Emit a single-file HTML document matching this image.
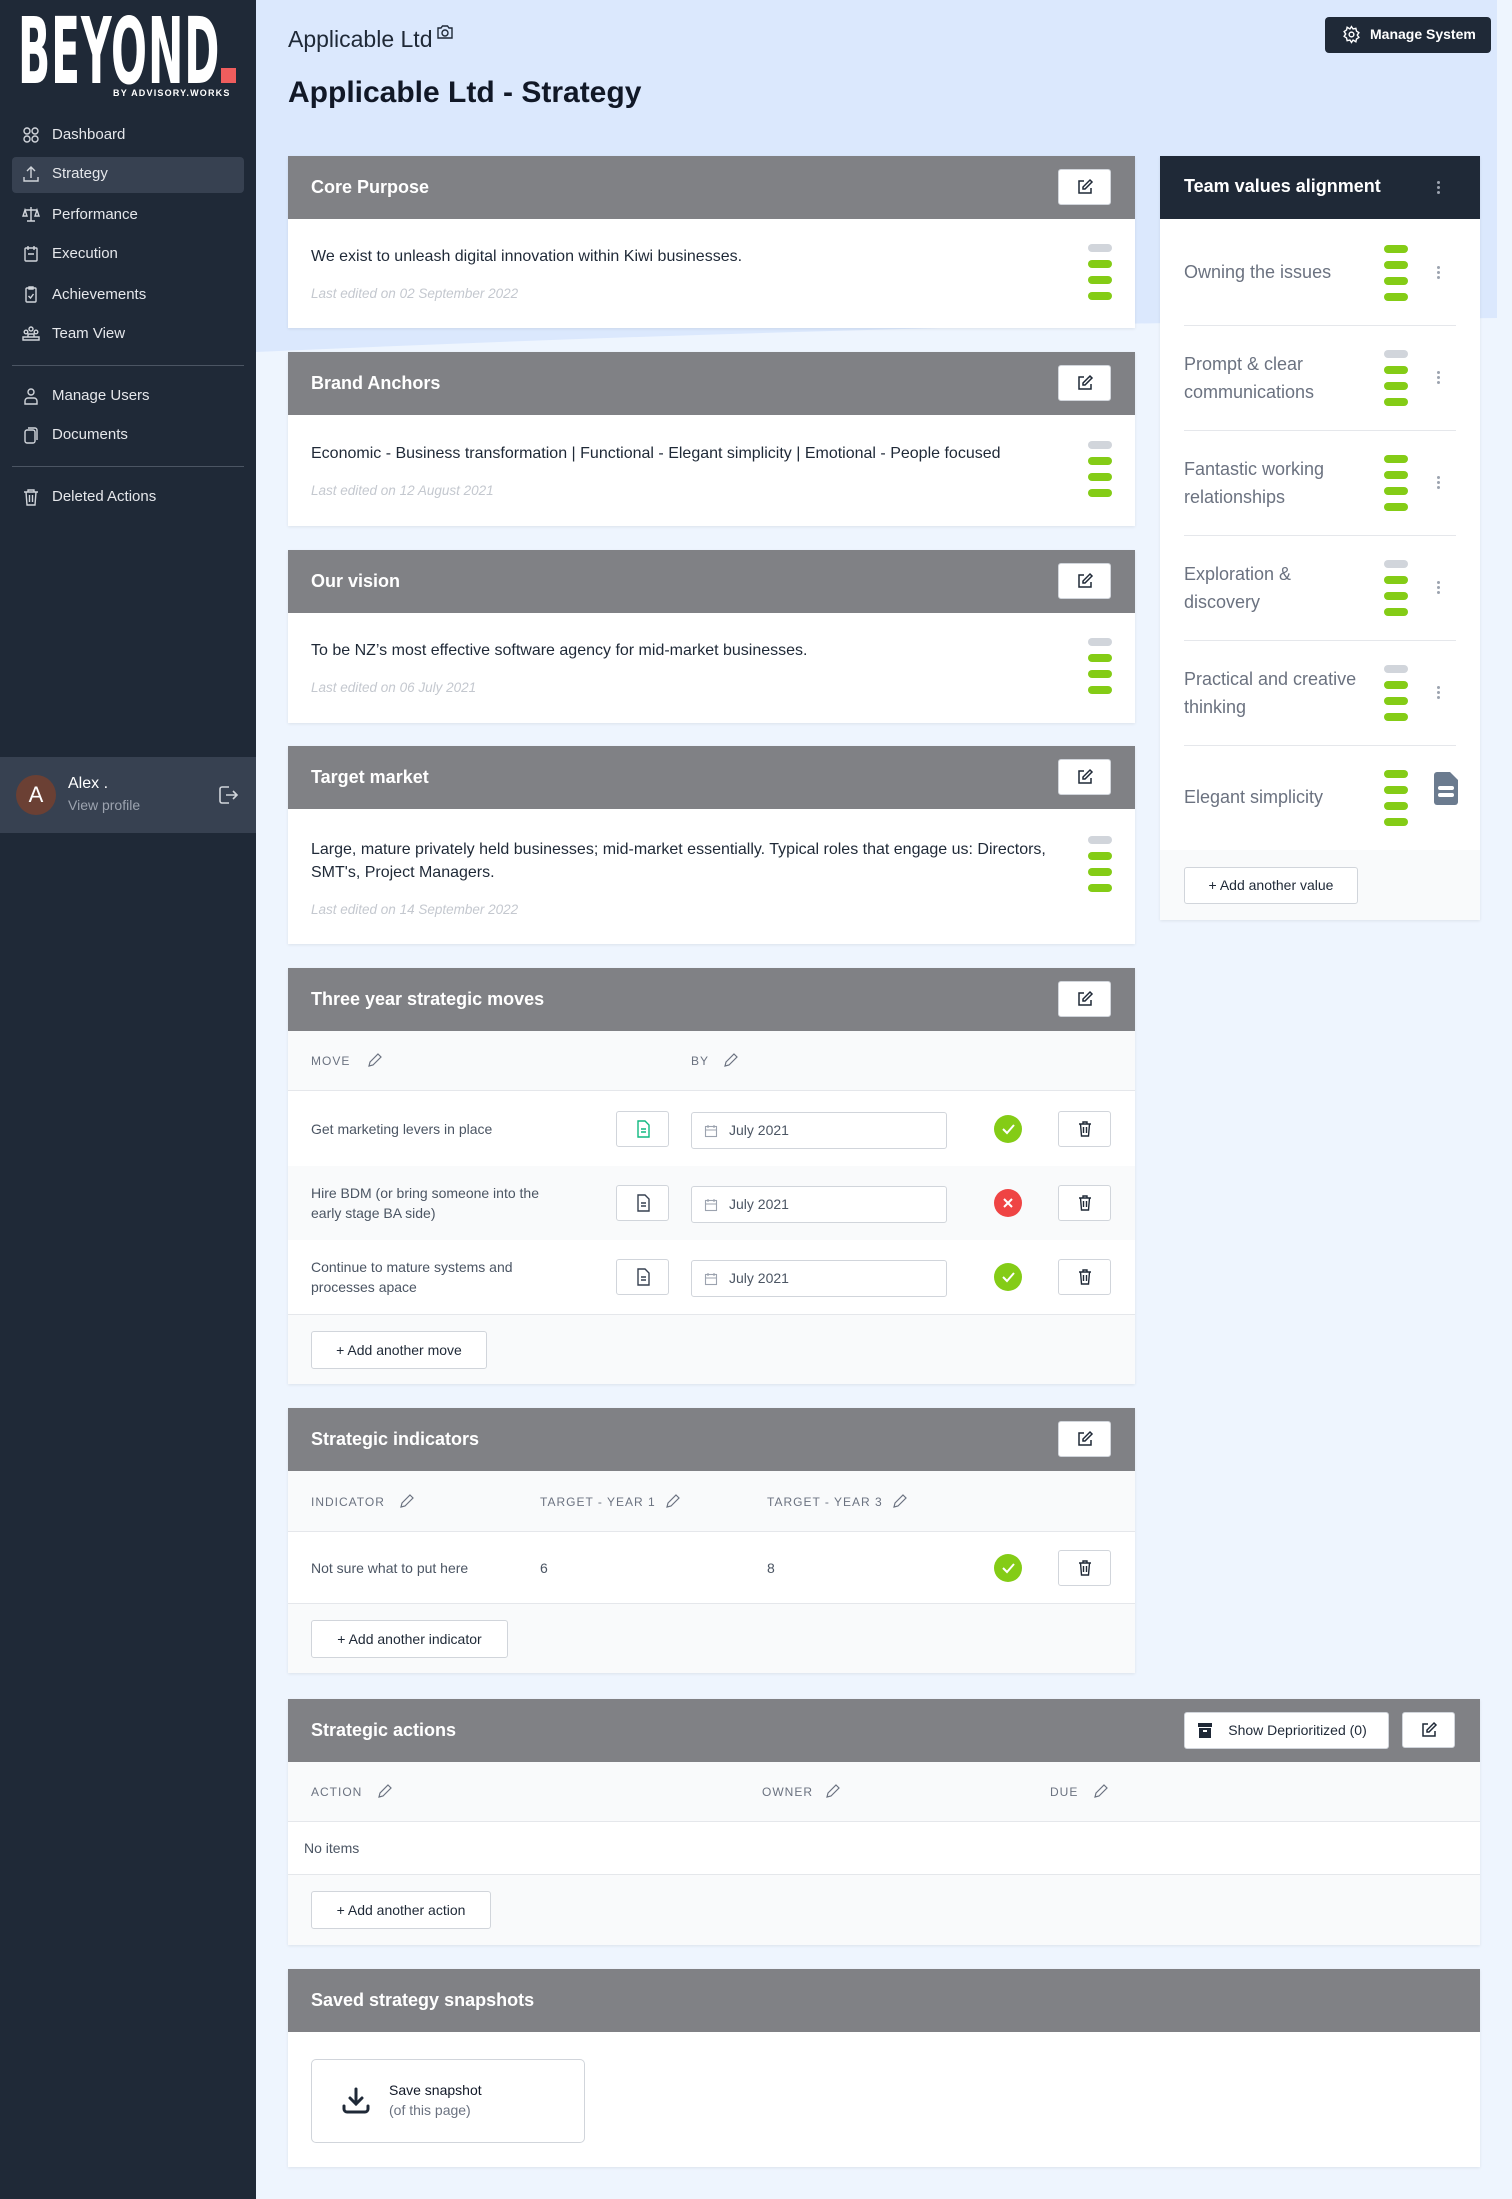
<!DOCTYPE html>
<html><head><meta charset="utf-8"><style>
*{box-sizing:border-box;margin:0;padding:0}
body{width:1512px;height:2199px;position:relative;overflow:hidden;background:#eef5fe;font-family:"Liberation Sans",sans-serif;color:#111827}
.a{position:absolute}
.side{left:0;top:0;width:256px;height:2199px;background:#1f2937}
.nav{left:52px;font-size:15px;color:#e5e7eb;line-height:20px}
.ni{left:22px;width:18px;height:18px}
.card{position:absolute;background:#fff;box-shadow:0 1px 3px rgba(0,0,0,.08)}
.hd{position:absolute;left:0;top:0;right:0;height:63px;background:#808185}
.hd .t{position:absolute;left:23px;top:21px;font-size:18px;font-weight:bold;color:#fff}
.eb{position:absolute;width:53px;height:36px;background:#fff;border:1px solid #d1d5db;border-radius:3px;top:13px;right:24px}
.eb svg{position:absolute;left:17px;top:8px}
.txt{position:absolute;left:23px;font-size:16px;color:#1f2937;line-height:23px}
.le{position:absolute;left:23px;font-size:13.5px;color:#c4c8cf;font-style:italic}
.bar{position:absolute;width:24px;height:8px;border-radius:4px;background:#84cc16}
.bar.g{background:#d1d5db}
.lab{position:absolute;font-size:12px;color:#6b7280;letter-spacing:1px}
.rt{position:absolute;font-size:14px;color:#4b5563;line-height:20px}
.btn{position:absolute;background:#fff;border:1px solid #d1d5db;border-radius:3px;font-size:14px;color:#1f2937;text-align:center}
.sq{position:absolute;width:53px;height:36px;background:#fff;border:1px solid #d1d5db;border-radius:3px}
.sq svg{position:absolute;left:17px;top:8px}
.date{position:absolute;left:691px;width:256px;height:37px;border:1px solid #d1d5db;border-radius:3px;background:#fff;font-size:14px;color:#4b5563}
.ok{position:absolute;left:994px;width:28px;height:28px;border-radius:50%;background:#84cc16}
.no{position:absolute;left:994px;width:28px;height:28px;border-radius:50%;background:#ef4444}
.vt{position:absolute;left:24px;font-size:18px;color:#6b7280;line-height:28px}
.dv{position:absolute;left:24px;width:272px;height:1px;background:#e5e7eb}
.dots{position:absolute;left:277px;width:4px}
.dots i{display:block;width:3px;height:3px;border-radius:50%;background:#9ca3af;margin-bottom:2px}
.sep{position:absolute;left:0;right:0;height:1px;background:#e5e7eb}
.gry{position:absolute;left:0;right:0;background:#f9fafb}
</style></head><body>
<svg class="a" style="left:256px;top:0" width="1256" height="360"><path d="M0 0H1241V318Q600 325 0 352Z" fill="#dbe8fd"/></svg>

<div class="a side"></div>
<div class="a" style="left:18px;top:10px;width:380px;font-size:92px;font-weight:bold;color:#fff;letter-spacing:2px;transform:scaleX(.46);transform-origin:0 0;line-height:84px;font-family:'DejaVu Sans','Liberation Sans',sans-serif">BEYOND</div>
<div class="a" style="left:221px;top:68px;width:15px;height:15px;background:#ef5d5d"></div>
<div class="a" style="left:113px;top:88px;font-size:9px;font-weight:bold;color:#fff;letter-spacing:1.2px">BY ADVISORY.WORKS</div>

<div class="a" style="left:12px;top:157px;width:232px;height:36px;background:#374151;border-radius:4px"></div>
<svg class="a ni" style="top:126px" viewBox="0 0 18 18" fill="none" stroke="#d1d5db" stroke-width="1.4"><circle cx="5" cy="5" r="3"/><circle cx="13" cy="5" r="3"/><circle cx="5" cy="13" r="3"/><circle cx="13" cy="13" r="3"/></svg>
<div class="a nav" style="top:125px">Dashboard</div>
<svg class="a ni" style="top:165px" viewBox="0 0 18 18" fill="none" stroke="#d1d5db" stroke-width="1.4"><path d="M9 13V2M5 6l4-4 4 4M2 12v4h14v-4"/></svg>
<div class="a nav" style="top:164px">Strategy</div>
<svg class="a ni" style="top:205px" viewBox="0 0 18 18" fill="none" stroke="#d1d5db" stroke-width="1.4"><path d="M9 2v14M5 16h8M3 5h12M3 5l-2 6h4zM15 5l-2 6h4z"/></svg>
<div class="a nav" style="top:205px">Performance</div>
<svg class="a ni" style="top:245px" viewBox="0 0 18 18" fill="none" stroke="#d1d5db" stroke-width="1.4"><rect x="3" y="3" width="12" height="13" rx="1"/><path d="M6 1v4M12 1v4M6 9h6"/></svg>
<div class="a nav" style="top:244px">Execution</div>
<svg class="a ni" style="top:285px" viewBox="0 0 18 18" fill="none" stroke="#d1d5db" stroke-width="1.4"><rect x="4" y="3" width="10" height="14" rx="1"/><path d="M7 2h4v2H7zM6.5 11l2 2 3-4"/></svg>
<div class="a nav" style="top:285px">Achievements</div>
<svg class="a ni" style="top:325px" viewBox="0 0 18 18" fill="none" stroke="#d1d5db" stroke-width="1.4"><circle cx="9" cy="4" r="2"/><circle cx="4" cy="7" r="1.8"/><circle cx="14" cy="7" r="1.8"/><path d="M1 15v-3h16v3zM6 12v-3h6v3"/></svg>
<div class="a nav" style="top:324px">Team View</div>
<div class="a" style="left:12px;top:365px;width:232px;height:1px;background:#4b5563"></div>
<svg class="a ni" style="top:387px" viewBox="0 0 18 18" fill="none" stroke="#d1d5db" stroke-width="1.4"><circle cx="9" cy="5" r="3"/><path d="M3 17v-3a3 3 0 013-3h6a3 3 0 013 3v3z"/></svg>
<div class="a nav" style="top:386px">Manage Users</div>
<svg class="a ni" style="top:426px" viewBox="0 0 18 18" fill="none" stroke="#d1d5db" stroke-width="1.4"><rect x="3" y="4" width="10" height="13" rx="2"/><path d="M6 2h7a2 2 0 012 2v10"/></svg>
<div class="a nav" style="top:425px">Documents</div>
<div class="a" style="left:12px;top:466px;width:232px;height:1px;background:#4b5563"></div>
<svg class="a ni" style="top:488px" viewBox="0 0 18 18" fill="none" stroke="#d1d5db" stroke-width="1.4"><path d="M2 4h14M6 4V2h6v2M4 4l1 13h8l1-13M7.5 7v7M10.5 7v7"/></svg>
<div class="a nav" style="top:487px">Deleted Actions</div>

<div class="a" style="left:0;top:757px;width:256px;height:76px;background:#374151"></div>
<div class="a" style="left:16px;top:775px;width:40px;height:40px;border-radius:50%;background:#6b4034;color:#fff;font-size:22px;text-align:center;line-height:40px">A</div>
<div class="a" style="left:68px;top:775px;font-size:16px;color:#fff">Alex .</div>
<div class="a" style="left:68px;top:797px;font-size:14px;color:#9ca3af">View profile</div>
<svg class="a" style="left:217px;top:784px" width="22" height="22" viewBox="0 0 22 22" fill="none" stroke="#d1d5db" stroke-width="1.6"><path d="M12 3H5a2 2 0 00-2 2v12a2 2 0 002 2h7M9 11h11M16 7l4 4-4 4"/></svg>

<div class="a" style="left:288px;top:26px;font-size:23px;color:#1f2937">Applicable Ltd</div>
<svg class="a" style="left:436px;top:24px" width="18" height="16" viewBox="0 0 18 16" fill="none" stroke="#1f2937" stroke-width="1.4"><path d="M2 4h3l1.5-2h5L13 4h3v10H2z"/><circle cx="9" cy="9" r="3"/></svg>
<div class="a" style="left:288px;top:76px;font-size:30px;font-weight:bold;color:#111827">Applicable Ltd - Strategy</div>

<div class="a" style="left:1325px;top:17px;width:166px;height:36px;background:#1f2937;border-radius:4px"></div>
<svg class="a" style="left:1342px;top:25px" width="19" height="19" viewBox="0 0 24 24" fill="none" stroke="#fff" stroke-width="1.8"><circle cx="12" cy="12" r="3"/><path d="M12 2l2 3 3.5-.8.8 3.5 3 2-2 3 2 3-3 2-.8 3.5L14 19l-2 3-2-3-3.5.8-.8-3.5-3-2 2-3-2-3 3-2 .8-3.5L10 5z"/></svg>
<div class="a" style="left:1370px;top:26px;font-size:14px;font-weight:bold;color:#fff">Manage System</div>

<div class="card" style="left:288px;top:156px;width:847px;height:172px">
<div class="hd"><div class="t">Core Purpose</div><div class="eb"><svg width="18" height="18" viewBox="0 0 18 18" fill="none" stroke="#1f2937" stroke-width="1.5"><path d="M8 3H3v12h12v-5M14 2l2 2-7 7H7V9z"/></svg></div></div>
<div class="txt" style="top:89px">We exist to unleash digital innovation within Kiwi businesses.</div>
<div class="le" style="top:130px">Last edited on 02 September 2022</div>
<div class="bar g" style="left:800px;top:88px"></div><div class="bar" style="left:800px;top:104px"></div><div class="bar" style="left:800px;top:120px"></div><div class="bar" style="left:800px;top:136px"></div>
</div>
<div class="card" style="left:288px;top:352px;width:847px;height:174px">
<div class="hd"><div class="t">Brand Anchors</div><div class="eb"><svg width="18" height="18" viewBox="0 0 18 18" fill="none" stroke="#1f2937" stroke-width="1.5"><path d="M8 3H3v12h12v-5M14 2l2 2-7 7H7V9z"/></svg></div></div>
<div class="txt" style="top:90px">Economic - Business transformation | Functional - Elegant simplicity | Emotional - People focused</div>
<div class="le" style="top:131px">Last edited on 12 August 2021</div>
<div class="bar g" style="left:800px;top:89px"></div><div class="bar" style="left:800px;top:105px"></div><div class="bar" style="left:800px;top:121px"></div><div class="bar" style="left:800px;top:137px"></div>
</div>
<div class="card" style="left:288px;top:550px;width:847px;height:173px">
<div class="hd"><div class="t">Our vision</div><div class="eb"><svg width="18" height="18" viewBox="0 0 18 18" fill="none" stroke="#1f2937" stroke-width="1.5"><path d="M8 3H3v12h12v-5M14 2l2 2-7 7H7V9z"/></svg></div></div>
<div class="txt" style="top:89px">To be NZ’s most effective software agency for mid-market businesses.</div>
<div class="le" style="top:130px">Last edited on 06 July 2021</div>
<div class="bar g" style="left:800px;top:88px"></div><div class="bar" style="left:800px;top:104px"></div><div class="bar" style="left:800px;top:120px"></div><div class="bar" style="left:800px;top:136px"></div>
</div>
<div class="card" style="left:288px;top:746px;width:847px;height:198px">
<div class="hd"><div class="t">Target market</div><div class="eb"><svg width="18" height="18" viewBox="0 0 18 18" fill="none" stroke="#1f2937" stroke-width="1.5"><path d="M8 3H3v12h12v-5M14 2l2 2-7 7H7V9z"/></svg></div></div>
<div class="txt" style="top:92px;width:770px">Large, mature privately held businesses; mid-market essentially. Typical roles that engage us: Directors, SMT's, Project Managers.</div>
<div class="le" style="top:156px">Last edited on 14 September 2022</div>
<div class="bar g" style="left:800px;top:90px"></div><div class="bar" style="left:800px;top:106px"></div><div class="bar" style="left:800px;top:122px"></div><div class="bar" style="left:800px;top:138px"></div>
</div>

<div class="card" style="left:288px;top:968px;width:847px;height:416px">
<div class="hd"><div class="t">Three year strategic moves</div><div class="eb"><svg width="18" height="18" viewBox="0 0 18 18" fill="none" stroke="#1f2937" stroke-width="1.5"><path d="M8 3H3v12h12v-5M14 2l2 2-7 7H7V9z"/></svg></div></div>
<div class="gry" style="top:63px;height:59px"></div>
<div class="lab" style="left:23px;top:86px">MOVE</div>
<svg class="a" style="left:80px;top:85px" width="14" height="14" viewBox="0 0 14 14" fill="none" stroke="#6b7280" stroke-width="1.2"><path d="M10 1l3 3-8 8-4 1 1-4z"/></svg>
<div class="lab" style="left:403px;top:86px">BY</div>
<svg class="a" style="left:436px;top:85px" width="14" height="14" viewBox="0 0 14 14" fill="none" stroke="#6b7280" stroke-width="1.2"><path d="M10 1l3 3-8 8-4 1 1-4z"/></svg>
<div class="sep" style="top:122px"></div>
<div class="gry" style="top:198px;height:74px"></div>
<div class="sep" style="top:346px"></div>
<div class="gry" style="top:347px;height:69px"></div>
</div>
<div class="rt" style="left:311px;top:1119px">Get marketing levers in place</div>
<div class="rt" style="left:311px;top:1183px;width:260px">Hire BDM (or bring someone into the early stage BA side)</div>
<div class="rt" style="left:311px;top:1257px;width:260px">Continue to mature systems and processes apace</div>
<div class="sq" style="left:616px;top:1111px"><svg width="18" height="18" viewBox="0 0 18 18" fill="none" stroke="#10b981" stroke-width="1.4"><path d="M4 1h7l4 4v12H4zM7 9h5M7 12h5"/></svg></div>
<div class="sq" style="left:616px;top:1185px"><svg width="18" height="18" viewBox="0 0 18 18" fill="none" stroke="#374151" stroke-width="1.4"><path d="M4 1h7l4 4v12H4zM7 9h5M7 12h5"/></svg></div>
<div class="sq" style="left:616px;top:1259px"><svg width="18" height="18" viewBox="0 0 18 18" fill="none" stroke="#374151" stroke-width="1.4"><path d="M4 1h7l4 4v12H4zM7 9h5M7 12h5"/></svg></div>
<div class="date" style="top:1112px"><svg class="a" style="left:12px;top:11px" width="14" height="14" viewBox="0 0 14 14" fill="none" stroke="#9ca3af" stroke-width="1.1"><rect x="1.5" y="2.5" width="11" height="10"/><path d="M4 1v3M10 1v3M1.5 6h11"/></svg><span class="a" style="left:37px;top:9px">July 2021</span></div>
<div class="date" style="top:1186px"><svg class="a" style="left:12px;top:11px" width="14" height="14" viewBox="0 0 14 14" fill="none" stroke="#9ca3af" stroke-width="1.1"><rect x="1.5" y="2.5" width="11" height="10"/><path d="M4 1v3M10 1v3M1.5 6h11"/></svg><span class="a" style="left:37px;top:9px">July 2021</span></div>
<div class="date" style="top:1260px"><svg class="a" style="left:12px;top:11px" width="14" height="14" viewBox="0 0 14 14" fill="none" stroke="#9ca3af" stroke-width="1.1"><rect x="1.5" y="2.5" width="11" height="10"/><path d="M4 1v3M10 1v3M1.5 6h11"/></svg><span class="a" style="left:37px;top:9px">July 2021</span></div>
<div class="ok" style="top:1115px"><svg width="28" height="28" viewBox="0 0 28 28" fill="none" stroke="#fff" stroke-width="2"><path d="M9 14l4 4 7-8"/></svg></div>
<div class="no" style="top:1189px"><svg width="28" height="28" viewBox="0 0 28 28" fill="none" stroke="#fff" stroke-width="2"><path d="M10 10l8 8M18 10l-8 8"/></svg></div>
<div class="ok" style="top:1263px"><svg width="28" height="28" viewBox="0 0 28 28" fill="none" stroke="#fff" stroke-width="2"><path d="M9 14l4 4 7-8"/></svg></div>
<div class="sq" style="left:1058px;top:1111px"><svg width="18" height="18" viewBox="0 0 18 18" fill="none" stroke="#1f2937" stroke-width="1.4"><path d="M3 4h12M7 4V2h4v2M4.5 4l1 12h7l1-12M7.5 7v6M10.5 7v6"/></svg></div>
<div class="sq" style="left:1058px;top:1185px"><svg width="18" height="18" viewBox="0 0 18 18" fill="none" stroke="#1f2937" stroke-width="1.4"><path d="M3 4h12M7 4V2h4v2M4.5 4l1 12h7l1-12M7.5 7v6M10.5 7v6"/></svg></div>
<div class="sq" style="left:1058px;top:1259px"><svg width="18" height="18" viewBox="0 0 18 18" fill="none" stroke="#1f2937" stroke-width="1.4"><path d="M3 4h12M7 4V2h4v2M4.5 4l1 12h7l1-12M7.5 7v6M10.5 7v6"/></svg></div>
<div class="btn" style="left:311px;top:1331px;width:176px;height:38px;line-height:36px">+ Add another move</div>

<div class="card" style="left:288px;top:1408px;width:847px;height:265px">
<div class="hd"><div class="t">Strategic indicators</div><div class="eb"><svg width="18" height="18" viewBox="0 0 18 18" fill="none" stroke="#1f2937" stroke-width="1.5"><path d="M8 3H3v12h12v-5M14 2l2 2-7 7H7V9z"/></svg></div></div>
<div class="gry" style="top:63px;height:60px"></div>
<div class="lab" style="left:23px;top:87px">INDICATOR</div>
<svg class="a" style="left:112px;top:86px" width="14" height="14" viewBox="0 0 14 14" fill="none" stroke="#6b7280" stroke-width="1.2"><path d="M10 1l3 3-8 8-4 1 1-4z"/></svg>
<div class="lab" style="left:252px;top:87px">TARGET - YEAR 1</div>
<svg class="a" style="left:378px;top:86px" width="14" height="14" viewBox="0 0 14 14" fill="none" stroke="#6b7280" stroke-width="1.2"><path d="M10 1l3 3-8 8-4 1 1-4z"/></svg>
<div class="lab" style="left:479px;top:87px">TARGET - YEAR 3</div>
<svg class="a" style="left:605px;top:86px" width="14" height="14" viewBox="0 0 14 14" fill="none" stroke="#6b7280" stroke-width="1.2"><path d="M10 1l3 3-8 8-4 1 1-4z"/></svg>
<div class="sep" style="top:123px"></div>
<div class="rt" style="left:23px;top:150px">Not sure what to put here</div>
<div class="rt" style="left:252px;top:150px">6</div>
<div class="rt" style="left:479px;top:150px">8</div>
<div class="sep" style="top:195px"></div>
<div class="gry" style="top:196px;height:69px"></div>
</div>
<div class="ok" style="top:1554px"><svg width="28" height="28" viewBox="0 0 28 28" fill="none" stroke="#fff" stroke-width="2"><path d="M9 14l4 4 7-8"/></svg></div>
<div class="sq" style="left:1058px;top:1550px"><svg width="18" height="18" viewBox="0 0 18 18" fill="none" stroke="#1f2937" stroke-width="1.4"><path d="M3 4h12M7 4V2h4v2M4.5 4l1 12h7l1-12M7.5 7v6M10.5 7v6"/></svg></div>
<div class="btn" style="left:311px;top:1620px;width:197px;height:38px;line-height:36px">+ Add another indicator</div>

<div class="card" style="left:288px;top:1699px;width:1192px;height:246px">
<div class="hd"><div class="t">Strategic actions</div></div>
<div class="gry" style="top:63px;height:59px"></div>
<div class="lab" style="left:23px;top:86px">ACTION</div>
<svg class="a" style="left:90px;top:85px" width="14" height="14" viewBox="0 0 14 14" fill="none" stroke="#6b7280" stroke-width="1.2"><path d="M10 1l3 3-8 8-4 1 1-4z"/></svg>
<div class="lab" style="left:474px;top:86px">OWNER</div>
<svg class="a" style="left:538px;top:85px" width="14" height="14" viewBox="0 0 14 14" fill="none" stroke="#6b7280" stroke-width="1.2"><path d="M10 1l3 3-8 8-4 1 1-4z"/></svg>
<div class="lab" style="left:762px;top:86px">DUE</div>
<svg class="a" style="left:806px;top:85px" width="14" height="14" viewBox="0 0 14 14" fill="none" stroke="#6b7280" stroke-width="1.2"><path d="M10 1l3 3-8 8-4 1 1-4z"/></svg>
<div class="sep" style="top:122px"></div>
<div class="rt" style="left:16px;top:139px">No items</div>
<div class="sep" style="top:175px"></div>
<div class="gry" style="top:176px;height:70px"></div>
</div>
<div class="btn" style="left:1184px;top:1712px;width:205px;height:37px;line-height:35px;padding-left:22px">Show Deprioritized (0)</div>
<svg class="a" style="left:1198px;top:1723px" width="14" height="15" viewBox="0 0 14 15"><rect x="0" y="0" width="14" height="4" fill="#1f2937"/><path d="M1 5h12v10H1z" fill="#1f2937"/><rect x="5" y="7" width="4" height="2" fill="#fff"/></svg>
<div class="sq" style="left:1402px;top:1712px"><svg width="18" height="18" viewBox="0 0 18 18" fill="none" stroke="#1f2937" stroke-width="1.5"><path d="M8 3H3v12h12v-5M14 2l2 2-7 7H7V9z"/></svg></div>
<div class="btn" style="left:311px;top:1891px;width:180px;height:38px;line-height:36px">+ Add another action</div>

<div class="card" style="left:288px;top:1969px;width:1192px;height:198px">
<div class="hd"><div class="t">Saved strategy snapshots</div></div>
</div>
<div class="a" style="left:311px;top:2059px;width:274px;height:84px;background:#fff;border:1px solid #d1d5db;border-radius:5px"></div>
<svg class="a" style="left:341px;top:2086px" width="30" height="30" viewBox="0 0 30 30" fill="none" stroke="#1f2937" stroke-width="3" stroke-linecap="round"><path d="M15 3v15M9 12l6 6 6-6M3 20v3a3 3 0 003 3h18a3 3 0 003-3v-3"/></svg>
<div class="a" style="left:389px;top:2082px;font-size:14px;color:#111827">Save snapshot</div>
<div class="a" style="left:389px;top:2102px;font-size:14px;color:#6b7280">(of this page)</div>

<div class="card" style="left:1160px;top:156px;width:320px;height:764px">
<div class="a" style="left:0;top:0;right:0;height:63px;background:#1f2937"></div>
<div class="a" style="left:24px;top:20px;font-size:18px;font-weight:bold;color:#fff">Team values alignment</div>
<div class="dots" style="top:25px"><i></i><i></i><i></i></div>

<div class="vt" style="top:102px">Owning the issues</div>
<div class="bar" style="left:224px;top:89px"></div><div class="bar" style="left:224px;top:105px"></div><div class="bar" style="left:224px;top:121px"></div><div class="bar" style="left:224px;top:137px"></div>
<div class="dots" style="top:110px"><i></i><i></i><i></i></div>
<div class="dv" style="top:169px"></div>

<div class="vt" style="top:194px">Prompt &amp; clear<br>communications</div>
<div class="bar g" style="left:224px;top:194px"></div><div class="bar" style="left:224px;top:210px"></div><div class="bar" style="left:224px;top:226px"></div><div class="bar" style="left:224px;top:242px"></div>
<div class="dots" style="top:215px"><i></i><i></i><i></i></div>
<div class="dv" style="top:274px"></div>

<div class="vt" style="top:299px">Fantastic working<br>relationships</div>
<div class="bar" style="left:224px;top:299px"></div><div class="bar" style="left:224px;top:315px"></div><div class="bar" style="left:224px;top:331px"></div><div class="bar" style="left:224px;top:347px"></div>
<div class="dots" style="top:320px"><i></i><i></i><i></i></div>
<div class="dv" style="top:379px"></div>

<div class="vt" style="top:404px">Exploration &amp;<br>discovery</div>
<div class="bar g" style="left:224px;top:404px"></div><div class="bar" style="left:224px;top:420px"></div><div class="bar" style="left:224px;top:436px"></div><div class="bar" style="left:224px;top:452px"></div>
<div class="dots" style="top:425px"><i></i><i></i><i></i></div>
<div class="dv" style="top:484px"></div>

<div class="vt" style="top:509px">Practical and creative<br>thinking</div>
<div class="bar g" style="left:224px;top:509px"></div><div class="bar" style="left:224px;top:525px"></div><div class="bar" style="left:224px;top:541px"></div><div class="bar" style="left:224px;top:557px"></div>
<div class="dots" style="top:530px"><i></i><i></i><i></i></div>
<div class="dv" style="top:589px"></div>

<div class="vt" style="top:627px">Elegant simplicity</div>
<div class="bar" style="left:224px;top:614px"></div><div class="bar" style="left:224px;top:630px"></div><div class="bar" style="left:224px;top:646px"></div><div class="bar" style="left:224px;top:662px"></div>
<svg class="a" style="left:274px;top:616px" width="24" height="33" viewBox="0 0 24 33"><path d="M3 0h13l8 8v22a3 3 0 01-3 3H3a3 3 0 01-3-3V3a3 3 0 013-3z" fill="#6b7b8f"/><rect x="4" y="14" width="16" height="4" rx="2" fill="#fff"/><rect x="4" y="21" width="16" height="4" rx="2" fill="#fff"/></svg>

<div class="gry" style="top:694px;height:70px"></div>
</div>
<div class="btn" style="left:1184px;top:867px;width:174px;height:37px;line-height:35px">+ Add another value</div>
</body></html>
